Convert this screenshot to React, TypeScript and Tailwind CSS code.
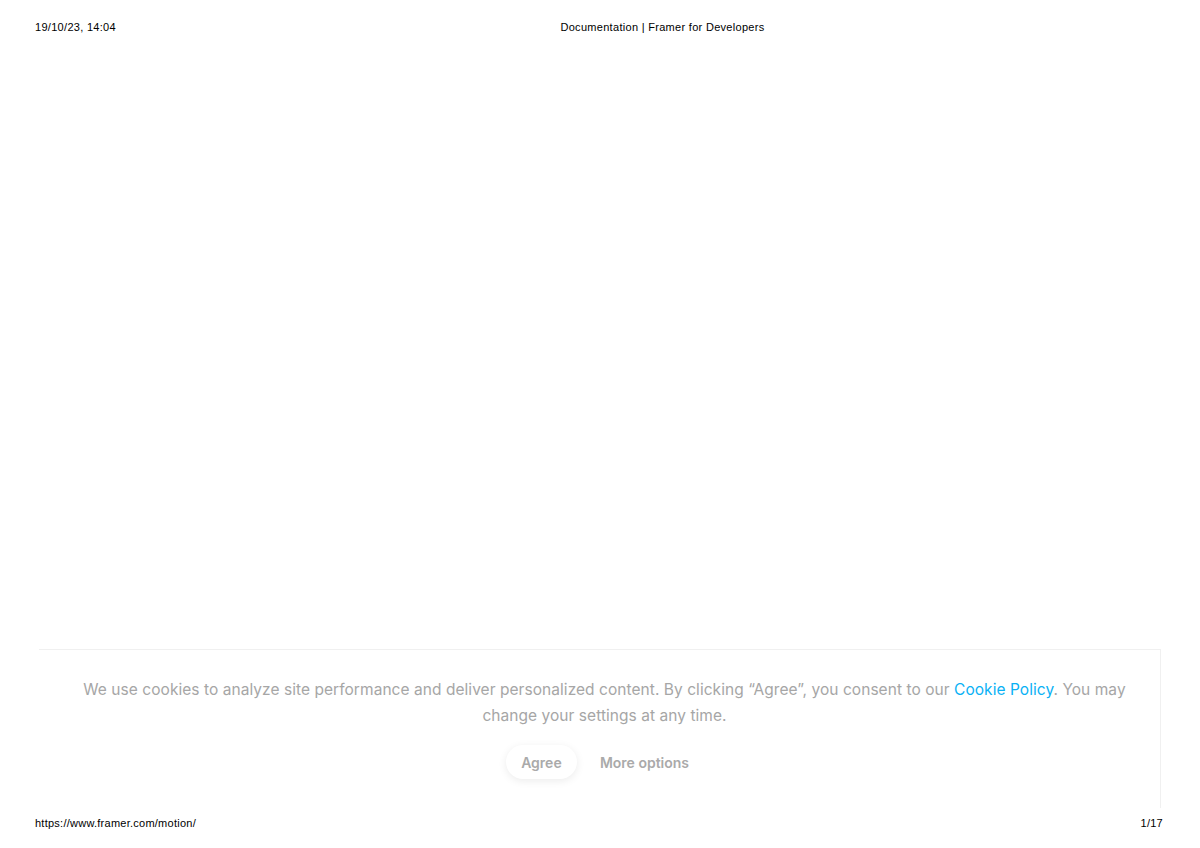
export default function App() {
  return (
    <div className="relative flex h-[848px] w-[1200px] flex-col bg-white font-['Liberation_Sans',Arial,sans-serif] text-black">
      {/* print header */}
      <div className="flex h-[54px] items-start justify-between px-[35px] pt-[20px] text-[11px] leading-[14px] tracking-[0.3px]">
        <span>19/10/23, 14:04</span>
        <span className="translate-x-[62px]">Documentation | Framer for Developers</span>
        <span className="w-[80px]" />
      </div>

      <div className="flex-1" />

      {/* cookie banner */}
      <div className="mx-[39px] flex h-[159px] flex-col items-center border-t border-r border-[#f0f0f0] pt-[27px] font-['Inter',sans-serif]">
        <p className="ml-[10px] w-[1070px] text-center text-[15.5px] leading-[26px] tracking-[0.05px] text-[#a6a6a6]">
          We use cookies to analyze site performance and deliver personalized content. By clicking “Agree”, you consent to our{" "}
          <span className="text-[#09b1f5]">Cookie Policy</span>. You may change your settings at any time.
        </p>
        <div className="mr-[4px] mt-[16px] flex items-center gap-[23px]">
          <button
            type="button"
            className="h-[34px] w-[71px] rounded-full bg-white text-[14px] font-semibold text-[#aaaaaa] shadow-[0_2px_8px_rgba(0,0,0,0.08)]"
          >
            Agree
          </button>
          <button type="button" className="text-[14px] font-semibold text-[#aaaaaa]">
            More options
          </button>
        </div>
      </div>

      {/* print footer */}
      <div className="flex h-[40px] items-start justify-between pl-[35px] pr-[37px] pt-[8px] text-[11px] leading-[14px] tracking-[0.25px]">
        <span>https://www.framer.com/motion/</span>
        <span>1/17</span>
      </div>
    </div>
  );
}
